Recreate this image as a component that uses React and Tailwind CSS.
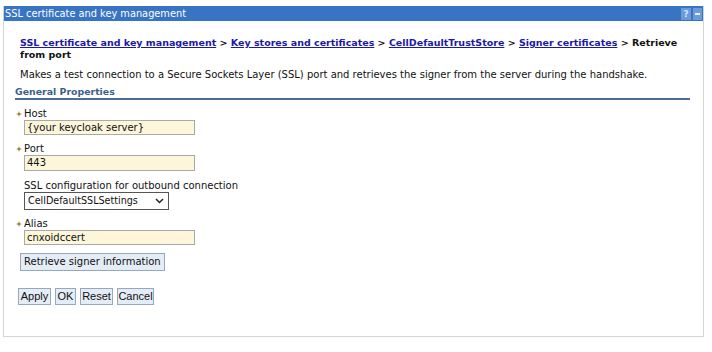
import React from "react";

const font = { fontFamily: '"DejaVu Sans", Verdana, sans-serif' };
const btnFont = { fontFamily: '"Liberation Sans", Arial, sans-serif' };

function Star() {
  return (
    <svg width="6" height="6" viewBox="0 0 6 6" className="mr-[2px]">
      <path d="M3 0 L3.7 2.3 L6 3 L3.7 3.7 L3 6 L2.3 3.7 L0 3 L2.3 2.3 Z" fill="#8a7a2a" />
    </svg>
  );
}

function Label({ children, required }) {
  return (
    <div className={"flex items-center h-[12px] leading-[12px] " + (required ? "-ml-[8px]" : "")}>
      {required && <Star />}
      <span>{children}</span>
    </div>
  );
}

function Input({ value }) {
  return (
    <div className="w-[171px] h-[15px] border border-[#a9a9a9] bg-[#fdf6da] px-[2px] leading-[13px] text-[#111]">
      {value}
    </div>
  );
}

function Btn({ children, className = "", style }) {
  return (
    <div style={style} className={"border border-[#98a8bc] bg-[#e4ecf5] text-[#111] " + className}>
      {children}
    </div>
  );
}

export default function App() {
  return (
    <div className="w-[712px] h-[352px] bg-white pt-[6px] pl-[3px]" style={font}>
      <div className="w-[701px] h-[331px] border-l border-r border-b border-[#d4d4d4] flex flex-col text-[10px] text-[#111]">
        <div className="h-[15px] bg-[#3874c4] flex items-center justify-between pl-[1px] pr-[1px]">
          <span className="text-white text-[9.8px] leading-[15px]">SSL certificate and key management</span>
          <div className="flex gap-[2px]">
            <div className="w-[10px] h-[12px] bg-[#6b9bd8] text-[#d8e6f8] text-[9px] font-bold leading-[12px] text-center">?</div>
            <div className="w-[9px] h-[12px] bg-[#6b9bd8] flex items-center justify-center">
              <div className="w-[5px] h-[2px] bg-[#e8f0fa]" />
            </div>
          </div>
        </div>
        <div className="pl-[16px] pr-[14px] pt-[16px]">
          <div className="font-bold leading-[12px] text-[9.5px]">
            <div className="whitespace-nowrap">
              <span className="text-[#1a1aa6] underline">SSL certificate and key management</span>
              {" > "}
              <span className="text-[#1a1aa6] underline">Key stores and certificates</span>
              {" > "}
              <span className="text-[#1a1aa6] underline">CellDefaultTrustStore</span>
              {" > "}
              <span className="text-[#1a1aa6] underline">Signer certificates</span>
              {" > "}Retrieve
            </div>
            <div>from port</div>
          </div>
          <div className="mt-[8px] leading-[12px]">
            Makes a test connection to a Secure Sockets Layer (SSL) port and retrieves the signer from the server during the handshake.
          </div>
          <div className="-ml-[5px] mt-[5px] w-[675px] border-b-2 border-[#4d6d94] text-[#3a5f8a] font-bold text-[9.4px] leading-[12px]">
            General Properties
          </div>
          <div className="pl-[4px] pt-[8px] flex flex-col">
            <Label required>Host</Label>
            <Input value="{your keycloak server}" />
            <div className="mt-[8px]">
              <Label required>Port</Label>
            </div>
            <div className="w-[171px] h-[16px] border border-[#a9a9a9] bg-[#fdf6da] px-[2px] leading-[14px] text-[#111]">443</div>
            <div className="mt-[9px]">
              <Label>SSL configuration for outbound connection</Label>
            </div>
            <div className="w-[145px] h-[18px] border border-[#555] bg-white flex items-center justify-between pl-[3px] pr-[4px]">
              <span className="text-[9.6px]">CellDefaultSSLSettings</span>
              <svg width="9" height="6" viewBox="0 0 9 6"><path d="M1 1 L4.5 4.5 L8 1" stroke="#222" strokeWidth="1.5" fill="none" /></svg>
            </div>
            <div className="mt-[8px]">
              <Label required>Alias</Label>
            </div>
            <Input value="cnxoidccert" />
            <div className="mt-[8px] -ml-[4px] flex">
              <Btn className="h-[18px] px-[3px] leading-[16px]">Retrieve signer information</Btn>
            </div>
          </div>
          <div className="mt-[17px] -ml-[2px] flex gap-[3px] text-[11px]" style={btnFont}>
            <Btn className="h-[17px] w-[33px] leading-[15px] text-center">Apply</Btn>
            <Btn className="h-[17px] w-[21px] leading-[15px] text-center ml-[1px]">OK</Btn>
            <Btn className="h-[17px] w-[33px] leading-[15px] text-center ml-[1px]">Reset</Btn>
            <Btn className="h-[17px] w-[37px] leading-[15px] text-center ml-[1px]">Cancel</Btn>
          </div>
        </div>
      </div>
    </div>
  );
}
